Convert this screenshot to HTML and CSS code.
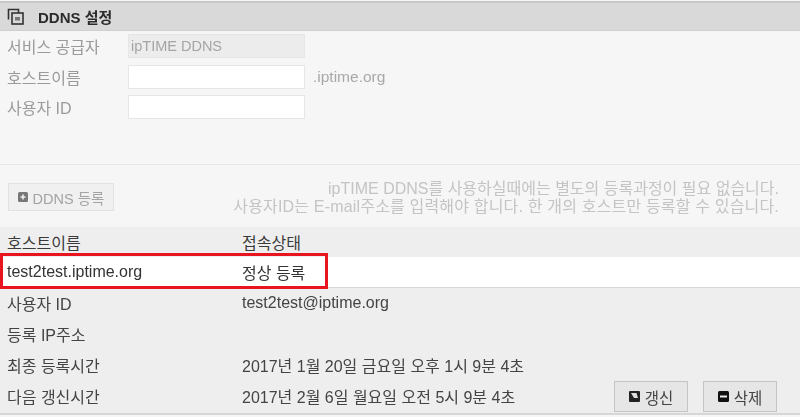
FILE: index.html
```html
<!DOCTYPE html>
<html lang="ko">
<head>
    <meta charset="UTF-8">
    <meta name="viewport" content="width=device-width, initial-scale=1.0">
    <title>DDNS 설정</title>
    <link rel="stylesheet" href="styles.css">
</head>
<body>

    <div class="panel">
        <div class="title">
            <svg class="title-icon" width="18" height="18" viewBox="0 0 18 18">
                <path d="M1.5 11.5V1.5H11.5V5" fill="none" stroke="#333" stroke-width="1.6"/>
                <rect x="5" y="5" width="11" height="11" fill="none" stroke="#333" stroke-width="1.6"/>
                <rect x="8" y="9" width="5" height="3.5" fill="#777"/>
            </svg>
            <span>DDNS 설정</span>
        </div>

        <div class="form">
            <div class="form-row">
                <label>서비스 공급자</label>
                <div class="input input-off">ipTIME DDNS</div>
            </div>
            <div class="form-row">
                <label>호스트이름</label>
                <div class="input"></div>
                <span class="suffix">.iptime.org</span>
            </div>
            <div class="form-row">
                <label>사용자 ID</label>
                <div class="input"></div>
            </div>
        </div>

        <div class="register">
            <button class="btn btn-off">
                <svg width="10" height="10" viewBox="0 0 10 10"><rect width="10" height="10" rx="1.5" fill="#777"/><path d="M5 2.5v5M2.5 5h5" stroke="#eee" stroke-width="1.6"/></svg>
                DDNS 등록
            </button>
            <p class="note">ipTIME DDNS를 사용하실때에는 별도의 등록과정이 필요 없습니다.<br><span class="note-wide">사용자ID는 E-mail주소를 입력해야 합니다. 한 개의 호스트만 등록할 수 있습니다.</span></p>
        </div>

        <div class="row row-head">
            <div class="col-a">호스트이름</div>
            <div>접속상태</div>
        </div>
        <div class="row row-host">
            <div class="col-a">test2test.iptime.org</div>
            <div>정상 등록</div>
            <div class="highlight"></div>
        </div>

        <div class="details">
            <div class="row">
                <div class="col-a">사용자 ID</div>
                <div>test2test@iptime.org</div>
            </div>
            <div class="row">
                <div class="col-a">등록 IP주소</div>
            </div>
            <div class="row">
                <div class="col-a">최종 등록시간</div>
                <div>2017년 1월 20일 금요일 오후 1시 9분 4초</div>
            </div>
            <div class="row">
                <div class="col-a">다음 갱신시간</div>
                <div>2017년 2월 6일 월요일 오전 5시 9분 4초</div>
                <div class="actions">
                    <button class="btn">
                        <svg width="11" height="11" viewBox="0 0 11 11"><rect width="11" height="11" rx="1" fill="#222"/><path d="M2 2h5.5l1.5 5H5z" fill="#ddd"/></svg>
                        갱신
                    </button>
                    <button class="btn">
                        <svg width="11" height="11" viewBox="0 0 11 11"><rect width="11" height="11" rx="1.5" fill="#111"/><rect x="2" y="4.5" width="7" height="2" fill="#eee"/></svg>
                        삭제
                    </button>
                </div>
            </div>
        </div>
    </div>

</body>
</html>
```

FILE: styles.css
```css
body {
    margin: 0;
    background-color: #f6f6f6;
    font-family: "Liberation Sans", "Noto Sans CJK KR", sans-serif;
    font-size: 16px;
    color: #444;
    overflow: hidden;
}

.panel {
    width: 800px;
    height: 417px;
    padding-top: 1px;
    box-sizing: border-box;
    filter: blur(0.5px);
}

.title {
    display: flex;
    align-items: center;
    height: 27px;
    padding-left: 7px;
    background-color: #d9d9d9;
    border-top: 2px solid #c9c9c9;
    border-bottom: 1px solid #cfcfcf;
    font-weight: bold;
    font-size: 15px;
    color: #2b2b2b;
}

.title-icon {
    margin-right: 13px;
}

.form {
    height: 134px;
    box-sizing: border-box;
    border-bottom: 1px solid #e8e8e8;
}

.form-row {
    display: flex;
    align-items: center;
    height: 30.5px;
    padding-left: 7px;
    color: #9a9a9a;
}

.form-row label {
    width: 121px;
}

.input {
    width: 173px;
    height: 22px;
    line-height: 22px;
    padding-left: 2px;
    background-color: #fff;
    border: 1px solid #e6e6e6;
    margin-right: 8px;
    font-size: 14.5px;
    color: #a5a5a5;
}

.input-off {
    background-color: #ececec;
}

.suffix {
    font-size: 15.5px;
    color: #a8a8a8;
}

.register {
    display: flex;
    justify-content: space-between;
    align-items: center;
    height: 62px;
    padding: 2px 21px 0 8px;
    box-sizing: border-box;
}

.btn {
    display: flex;
    align-items: center;
    justify-content: center;
    gap: 5px;
    height: 31px;
    padding: 0;
    width: 74px;
    background-color: #e6e6e6;
    border: 1px solid #c4c4c4;
    font-family: inherit;
    font-size: 15.5px;
    color: #444;
}

.btn-off {
    width: 106px;
    height: 28px;
    background-color: #f0f0f0;
    border-color: #e2e2e2;
    font-size: 14.5px;
    color: #a3a3a3;
}

.note {
    margin: 2px 0 0;
    text-align: right;
    line-height: 18px;
    color: #c4c4c4;
}

.note-wide {
    letter-spacing: 0.18px;
}

.row {
    position: relative;
    display: flex;
    align-items: center;
    height: 31px;
    padding-left: 7px;
}

.row-head {
    height: 30px;
    padding-bottom: 1px;
    box-sizing: border-box;
    background-color: #eee;
    color: #3a3a3a;
}

.row-host {
    box-sizing: border-box;
    background-color: #fff;
    border-bottom: 1px solid #d6d6d6;
    color: #333;
}

.details .row {
    box-sizing: border-box;
    padding-bottom: 2px;
}

.col-a {
    width: 235px;
}

.highlight {
    position: absolute;
    left: 0;
    top: -4px;
    width: 322px;
    height: 30px;
    border: 3px solid #e8141f;
}

.details {
    height: 127px;
    background-color: #eee;
    border-bottom: 2px solid #d6d6d6;
    box-sizing: border-box;
}

.actions {
    display: flex;
    gap: 15px;
    margin-top: 2px;
    margin-left: auto;
    margin-right: 23px;
}
```
